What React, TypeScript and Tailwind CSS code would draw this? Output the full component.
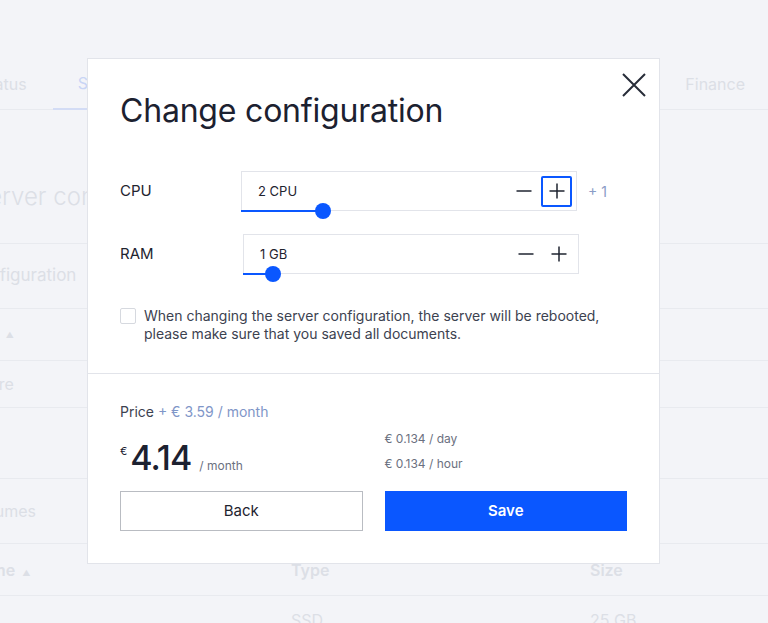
const faint = "text-[#dcdfe6]";

const Minus = () => (
  <svg width="16" height="16" viewBox="0 0 16 16" fill="none">
    <path d="M0.5 8H15.5" stroke="#1f2430" strokeWidth="1.5" />
  </svg>
);

const Plus = () => (
  <svg width="16" height="16" viewBox="0 0 16 16" fill="none">
    <path d="M0.5 8H15.5M8 0.5V15.5" stroke="#1f2430" strokeWidth="1.5" />
  </svg>
);

interface StepperProps {
  value: string;
  fill: string;
  plusActive?: boolean;
}

const Stepper = ({ value, fill, plusActive }: StepperProps) => (
  <div className="relative flex h-[40px] w-[336px] items-center border border-[#e2e4ea] bg-white pl-[16px] pr-[4px]">
    <span className="flex-1 pt-[1px] text-[13px] text-[#1f2430]">{value}</span>
    <button className="flex h-[31px] w-[31px] items-center justify-center">
      <Minus />
    </button>
    <button
      className={
        plusActive
          ? "ml-[2px] flex h-[31px] w-[31px] items-center justify-center rounded-[2px] border-2 border-[#0a57ff]"
          : "ml-[2px] flex h-[31px] w-[31px] items-center justify-center"
      }
    >
      <Plus />
    </button>
    {/* slider track along the bottom edge */}
    <div className={`absolute bottom-[-2px] left-[-1px] h-[2px] bg-[#0a57ff] ${fill}`} />
    <div className={`absolute bottom-[-9px] h-[16px] w-[16px] rounded-full bg-[#0a57ff] ${fill === "w-[82px]" ? "left-[73px]" : "left-[21px]"}`} />
  </div>
);

const Background = () => (
  <div className="pt-[58px]">
    {/* tabs */}
    <div className="flex h-[52px] items-stretch border-b border-[#e8eaef] text-[16px]">
      <div className={`-ml-[47px] flex items-center px-[26px] ${faint}`}>Status</div>
      <div className="-mb-px flex items-center border-b-2 border-[#d3dcf5] px-[25px] text-[#c9d5f5]">Servers</div>
      <div className={`ml-auto flex items-center pr-[23px] ${faint}`}>Finance</div>
    </div>
    <div className="-ml-[33px]">
      <div className={`border-b border-[#e8eaef] pb-[29px] pt-[70px] pl-[6px] text-[24px] font-light leading-[34px] ${faint}`}>
        Server configuration
      </div>
      <div className={`flex h-[65px] items-center border-b border-[#e8eaef] text-[17px] ${faint}`}>
        Configuration
      </div>
      <div className={`flex h-[52px] items-center border-b border-[#e8eaef] text-[14px] ${faint}`}>
        <span className="-ml-[6px]">Name</span> <span className="ml-[6px] text-[8px]">▲</span>
      </div>
      <div className={`flex h-[47px] items-center border-b border-[#e8eaef] text-[16px] ${faint}`}>
        <span className="-ml-[21px]">Software</span>
      </div>
      <div className="h-[71px] border-b border-[#e8eaef]" />
      <div className={`flex h-[65px] items-center border-b border-[#e8eaef] text-[16px] ${faint}`}>
        <span className="ml-[4px]">Volumes</span>
      </div>
      <div className={`grid h-[52px] grid-cols-[324px_299px_1fr] items-center border-b border-[#e8eaef] text-[16px] font-semibold ${faint}`}>
        <span className="pl-[3px]">
          Name <span className="ml-[3px] text-[8px]">▲</span>
        </span>
        <span>Type</span>
        <span>Size</span>
      </div>
      <div className={`grid h-[47px] grid-cols-[324px_299px_1fr] items-center text-[16px] ${faint}`}>
        <span />
        <span>SSD</span>
        <span>25 GB</span>
      </div>
    </div>
  </div>
);

export default function App() {
  return (
    <div className="relative h-[623px] w-[768px] overflow-hidden bg-[#f3f4f8] font-['Inter',sans-serif]">
      <Background />

      {/* modal */}
      <div className="absolute left-[87px] top-[58px] w-[573px] border border-[#e2e4ea] bg-white">
        <button className="absolute right-[13px] top-[14px]">
          <svg width="24" height="24" viewBox="0 0 24 24" fill="none">
            <path d="M1 1L23 23M23 1L1 23" stroke="#272c38" strokeWidth="2" />
          </svg>
        </button>

        <div className="border-b border-[#e2e4ea] px-[32px] pb-[30px] pt-[32px]">
          <h2 className="text-[32px] leading-[40px] tracking-[-0.2px] text-[#1c2130]">Change configuration</h2>

          <div className="mt-[40px] flex items-center">
            <span className="w-[121px] pt-[1px] text-[15px] text-[#1f2430]">CPU</span>
            <Stepper value="2 CPU" fill="w-[82px]" plusActive />
            <span className="ml-[11px] text-[14px] text-[#8a9cc6]">+ 1</span>
          </div>

          <div className="mt-[23px] flex items-center">
            <span className="w-[123px] pt-[1px] text-[15px] text-[#1f2430]">RAM</span>
            <Stepper value="1 GB" fill="w-[30px]" />
          </div>

          <label className="mt-[33px] flex items-start">
            <span className="mt-[1px] h-[16px] w-[16px] shrink-0 rounded-[2px] border border-[#d6d9df]" />
            <span className="ml-[8px] text-[14px] leading-[18px] text-[#3c4250]">
              When changing the server configuration, the server will be rebooted, please make sure that you saved all documents.
            </span>
          </label>
        </div>

        <div className="px-[32px] pb-[32px] pt-[28px]">
          <div className="grid grid-cols-2 gap-x-[22px]">
            <div className="flex flex-col">
              <div className="text-[14px] leading-[20px] text-[#3c4250]">
                Price <span className="text-[#7f96c8]">+ € 3.59 / month</span>
              </div>
              <div className="mt-[19px] flex items-baseline">
                <span className="self-start pt-[4px] text-[11px] leading-[12px] text-[#1c2130]">€</span>
                <span className="ml-[3px] text-[34px] leading-[34px] font-medium tracking-[-1px] text-[#1c2130]">4.14</span>
                <span className="ml-[8px] text-[12px] text-[#6b7080]">/ month</span>
              </div>
            </div>
            <div className="flex flex-col pt-[24px] text-[12px] leading-[25px] text-[#6b7080]">
              <span>€ 0.134 / day</span>
              <span>€ 0.134 / hour</span>
            </div>
          </div>

          <div className="mt-[15px] grid grid-cols-2 gap-x-[22px]">
            <button className="h-[40px] border border-[#b9bcc2] bg-white pt-[1px] text-[15px] text-[#1f2430]">Back</button>
            <button className="h-[40px] bg-[#0a57ff] pt-[1px] text-[15px] font-semibold text-white">Save</button>
          </div>
        </div>
      </div>
    </div>
  );
}
